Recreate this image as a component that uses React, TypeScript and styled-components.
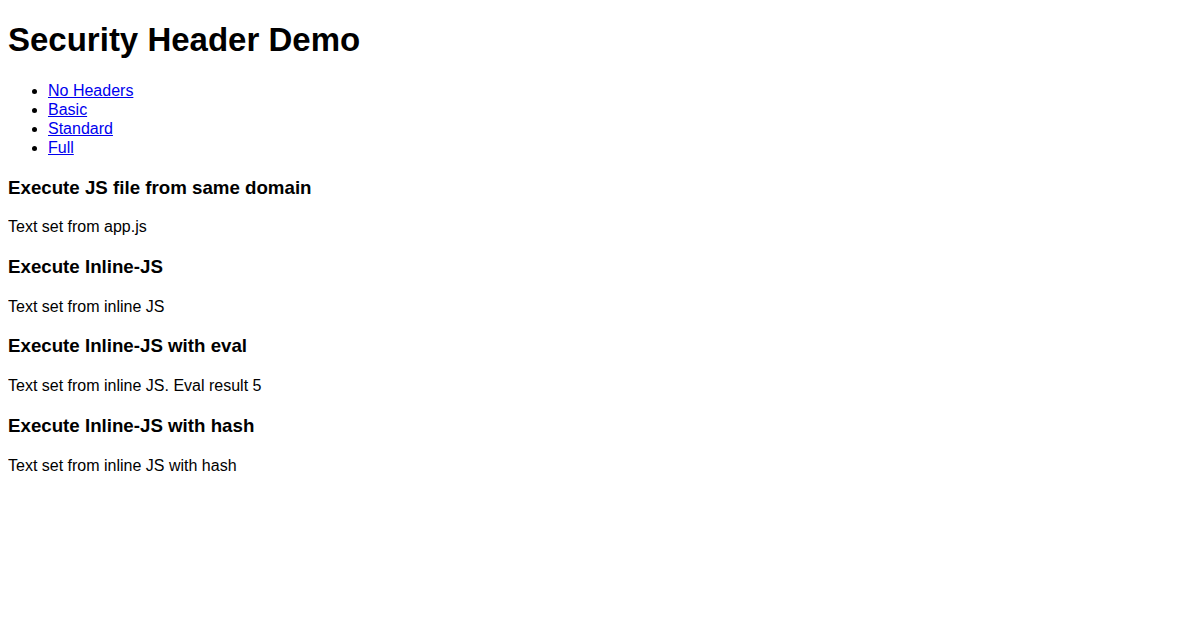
import styled, { createGlobalStyle } from "styled-components";

const GlobalStyle = createGlobalStyle`
  body {
    margin: 0 8px 8px;
    background: #ffffff;
    color: #000000;
    font-family: "Liberation Sans", Arial, sans-serif;
    font-size: 16px;
    line-height: 19px;
  }
`;

const Page = styled.div`
  display: block;
`;

const Title = styled.h1`
  font-size: 33px;
  line-height: 38px;
  font-weight: 700;
  margin: 21.44px 0;
`;

const NavList = styled.ul`
  margin: 16px 0;
  padding-left: 40px;
  list-style: disc;
`;

const NavLink = styled.a`
  color: #0000ee;
  text-decoration: underline;
`;

const SectionTitle = styled.h3`
  font-size: 18.72px;
  line-height: 23px;
  font-weight: 700;
  margin: 18.72px 0;
`;

const Result = styled.p`
  margin: 16px 0;
`;

const links = ["No Headers", "Basic", "Standard", "Full"];

const sections = [
  { title: "Execute JS file from same domain", text: "Text set from app.js" },
  { title: "Execute Inline-JS", text: "Text set from inline JS" },
  {
    title: "Execute Inline-JS with eval",
    text: "Text set from inline JS. Eval result 5",
  },
  { title: "Execute Inline-JS with hash", text: "Text set from inline JS with hash" },
];

export default function App() {
  return (
    <Page>
      <GlobalStyle />
      <Title>Security Header Demo</Title>
      <NavList>
        {links.map((l) => (
          <li key={l}>
            <NavLink href="#">{l}</NavLink>
          </li>
        ))}
      </NavList>
      {sections.map((s) => (
        <div key={s.title}>
          <SectionTitle>{s.title}</SectionTitle>
          <Result>{s.text}</Result>
        </div>
      ))}
    </Page>
  );
}
